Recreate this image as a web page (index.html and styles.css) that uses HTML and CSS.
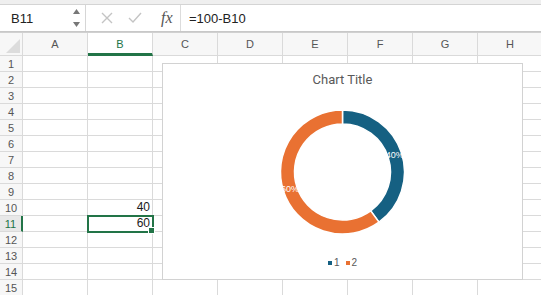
FILE: index.html
```html
<!DOCTYPE html>
<html lang="en">
<head>
    <meta charset="UTF-8">
    <meta name="viewport" content="width=device-width, initial-scale=1.0">
    <title>Sheet</title>
    <link rel="stylesheet" href="styles.css">
</head>
<body>
    <div class="topstrip"></div>
    <div class="formula-bar">
        <div class="namebox">
            <span class="cellref">B11</span>
            <span class="spinner">
                <svg width="9" height="20" viewBox="0 0 9 20">
                    <path d="M4.5 1 L8 6 L1 6 Z" fill="#777"/>
                    <path d="M4.5 19 L8 14 L1 14 Z" fill="#777"/>
                </svg>
            </span>
        </div>
        <div class="fx-icons">
            <svg class="icon" width="14" height="14" viewBox="0 0 14 14">
                <path d="M2 2 L12 12 M12 2 L2 12" stroke="#c4c4c4" stroke-width="1.4"/>
            </svg>
            <svg class="icon" width="16" height="14" viewBox="0 0 16 14">
                <path d="M2 7 L6 11 L14 2" stroke="#c4c4c4" stroke-width="1.4" fill="none"/>
            </svg>
            <span class="fx">fx</span>
        </div>
        <div class="formula">=100-B10</div>
    </div>

    <div class="sheet">
        <div class="grid" id="grid"></div>

        <div class="chart">
            <div class="chart-title">Chart Title</div>
            <svg class="plot" width="359" height="166" viewBox="0 0 359 166">
                <path d="M179.5 21 A62 62 0 0 1 215.94 133.16 L207.71 121.83 A48 48 0 0 0 179.5 35 Z" fill="#156082" stroke="#fff" stroke-width="1.5"/>
                <path d="M215.94 133.16 A62 62 0 1 1 179.5 21 L179.5 35 A48 48 0 1 0 207.71 121.83 Z" fill="#e97132" stroke="#fff" stroke-width="1.5"/>
                <text x="231.8" y="66" class="pct">40%</text>
                <text x="127" y="100" class="pct">60%</text>
            </svg>
            <div class="legend">
                <span class="key"><i class="swatch blue"></i>1</span>
                <span class="key"><i class="swatch orange"></i>2</span>
            </div>
        </div>
    </div>

    <script>
        const grid = document.getElementById('grid');
        const cols = ['A', 'B', 'C', 'D', 'E', 'F', 'G', 'H'];
        const values = { 'B10': '40', 'B11': '60' };

        let html = '<div class="corner"><span class="tri"></span></div>';
        cols.forEach(function (c) {
            html += `<div class="colhead${c === 'B' ? ' active' : ''}">${c}</div>`;
        });

        for (let r = 1; r <= 15; r++) {
            html += `<div class="rowhead${r === 11 ? ' active' : ''}">${r}</div>`;
            cols.forEach(function (c) {
                const ref = c + r;
                const sel = ref === 'B11' ? ' selected' : '';
                html += `<div class="cell${sel}">${values[ref] || ''}</div>`;
            });
        }

        grid.innerHTML = html;
    </script>
</body>
</html>
```

FILE: styles.css
```css
body {
    margin: 0;
    font-family: "Liberation Sans", Arial, sans-serif;
    background: #ffffff;
    overflow: hidden;
}

.topstrip {
    height: 4px;
    background: #efefef;
    border-bottom: 1px solid #d4d4d4;
}

.formula-bar {
    display: flex;
    align-items: center;
    height: 26px;
    border-bottom: 1px solid #c8c8c8;
    background: #ffffff;
}

.namebox {
    display: flex;
    align-items: center;
    justify-content: space-between;
    box-sizing: border-box;
    width: 86px;
    height: 26px;
    padding: 0 4px 0 11px;
    border-right: 1px solid #d6d6d6;
    font-size: 13px;
    color: #222;
}

.spinner {
    display: flex;
}

.fx-icons {
    display: flex;
    align-items: center;
    width: 95px;
    height: 26px;
    padding-left: 14px;
    box-sizing: border-box;
    gap: 13px;
    border-right: 1px solid #dcdcdc;
}

.fx {
    font-family: "Liberation Serif", serif;
    font-style: italic;
    font-size: 16px;
    color: #555;
    margin-left: 5px;
}

.formula {
    padding-left: 8px;
    font-size: 13px;
    color: #222;
}

.sheet {
    position: relative;
    border-top: 1px solid #d0d0d0;
}

.grid {
    display: grid;
    grid-template-columns: 23px repeat(8, 65px);
    grid-template-rows: 23px repeat(15, 16px);
}

.grid > div {
    box-sizing: border-box;
    border-right: 1px solid #dadada;
    border-bottom: 1px solid #dadada;
}

.corner {
    position: relative;
    background: #f7f7f7;
}

.tri {
    position: absolute;
    right: 2px;
    bottom: 2px;
    width: 0;
    height: 0;
    border-left: 14px solid transparent;
    border-bottom: 14px solid #dcdcdc;
}

.colhead {
    display: flex;
    align-items: center;
    justify-content: center;
    font-size: 11px;
    color: #555;
    background: #f7f7f7;
}

.colhead.active {
    color: #227447;
    background: #ffffff;
    border-bottom: 3px solid #227447 !important;
    padding-top: 2px;
}

.rowhead {
    display: flex;
    align-items: center;
    justify-content: center;
    font-size: 11px;
    color: #555;
    background: #f7f7f7;
}

.rowhead.active {
    color: #227447;
    background: #e8e8e8;
    border-right: 2px solid #227447 !important;
}

.cell {
    text-align: right;
    padding-right: 2px;
    font-size: 12px;
    line-height: 15px;
    color: #1a1a1a;
}

.cell.selected {
    position: relative;
    z-index: 1;
    outline: 2px solid #227447;
    outline-offset: -1px;
}

.cell.selected::after {
    content: "";
    position: absolute;
    right: -3px;
    bottom: -3px;
    width: 5px;
    height: 5px;
    background: #227447;
    border: 1px solid #ffffff;
}

.chart {
    position: absolute;
    left: 162px;
    top: 30px;
    width: 361px;
    height: 217px;
    box-sizing: border-box;
    border: 1px solid #d2d2d2;
    background: #ffffff;
    z-index: 2;
}

.chart-title {
    padding-top: 7px;
    height: 18px;
    line-height: 18px;
    text-align: center;
    font-family: Roboto, sans-serif;
    font-size: 13px;
    color: #595959;
}

.plot {
    display: block;
}

.pct {
    font-family: "Liberation Sans", Arial, sans-serif;
    font-size: 9px;
    fill: #ffffff;
    text-anchor: middle;
    dominant-baseline: central;
}

.legend {
    display: flex;
    justify-content: center;
    gap: 6px;
    line-height: 16px;
    font-size: 10px;
    color: #595959;
}

.key {
    display: flex;
    align-items: center;
    gap: 2px;
}

.swatch {
    display: inline-block;
    width: 4px;
    height: 4px;
}

.blue {
    background: #156082;
}

.orange {
    background: #e97132;
}
```
